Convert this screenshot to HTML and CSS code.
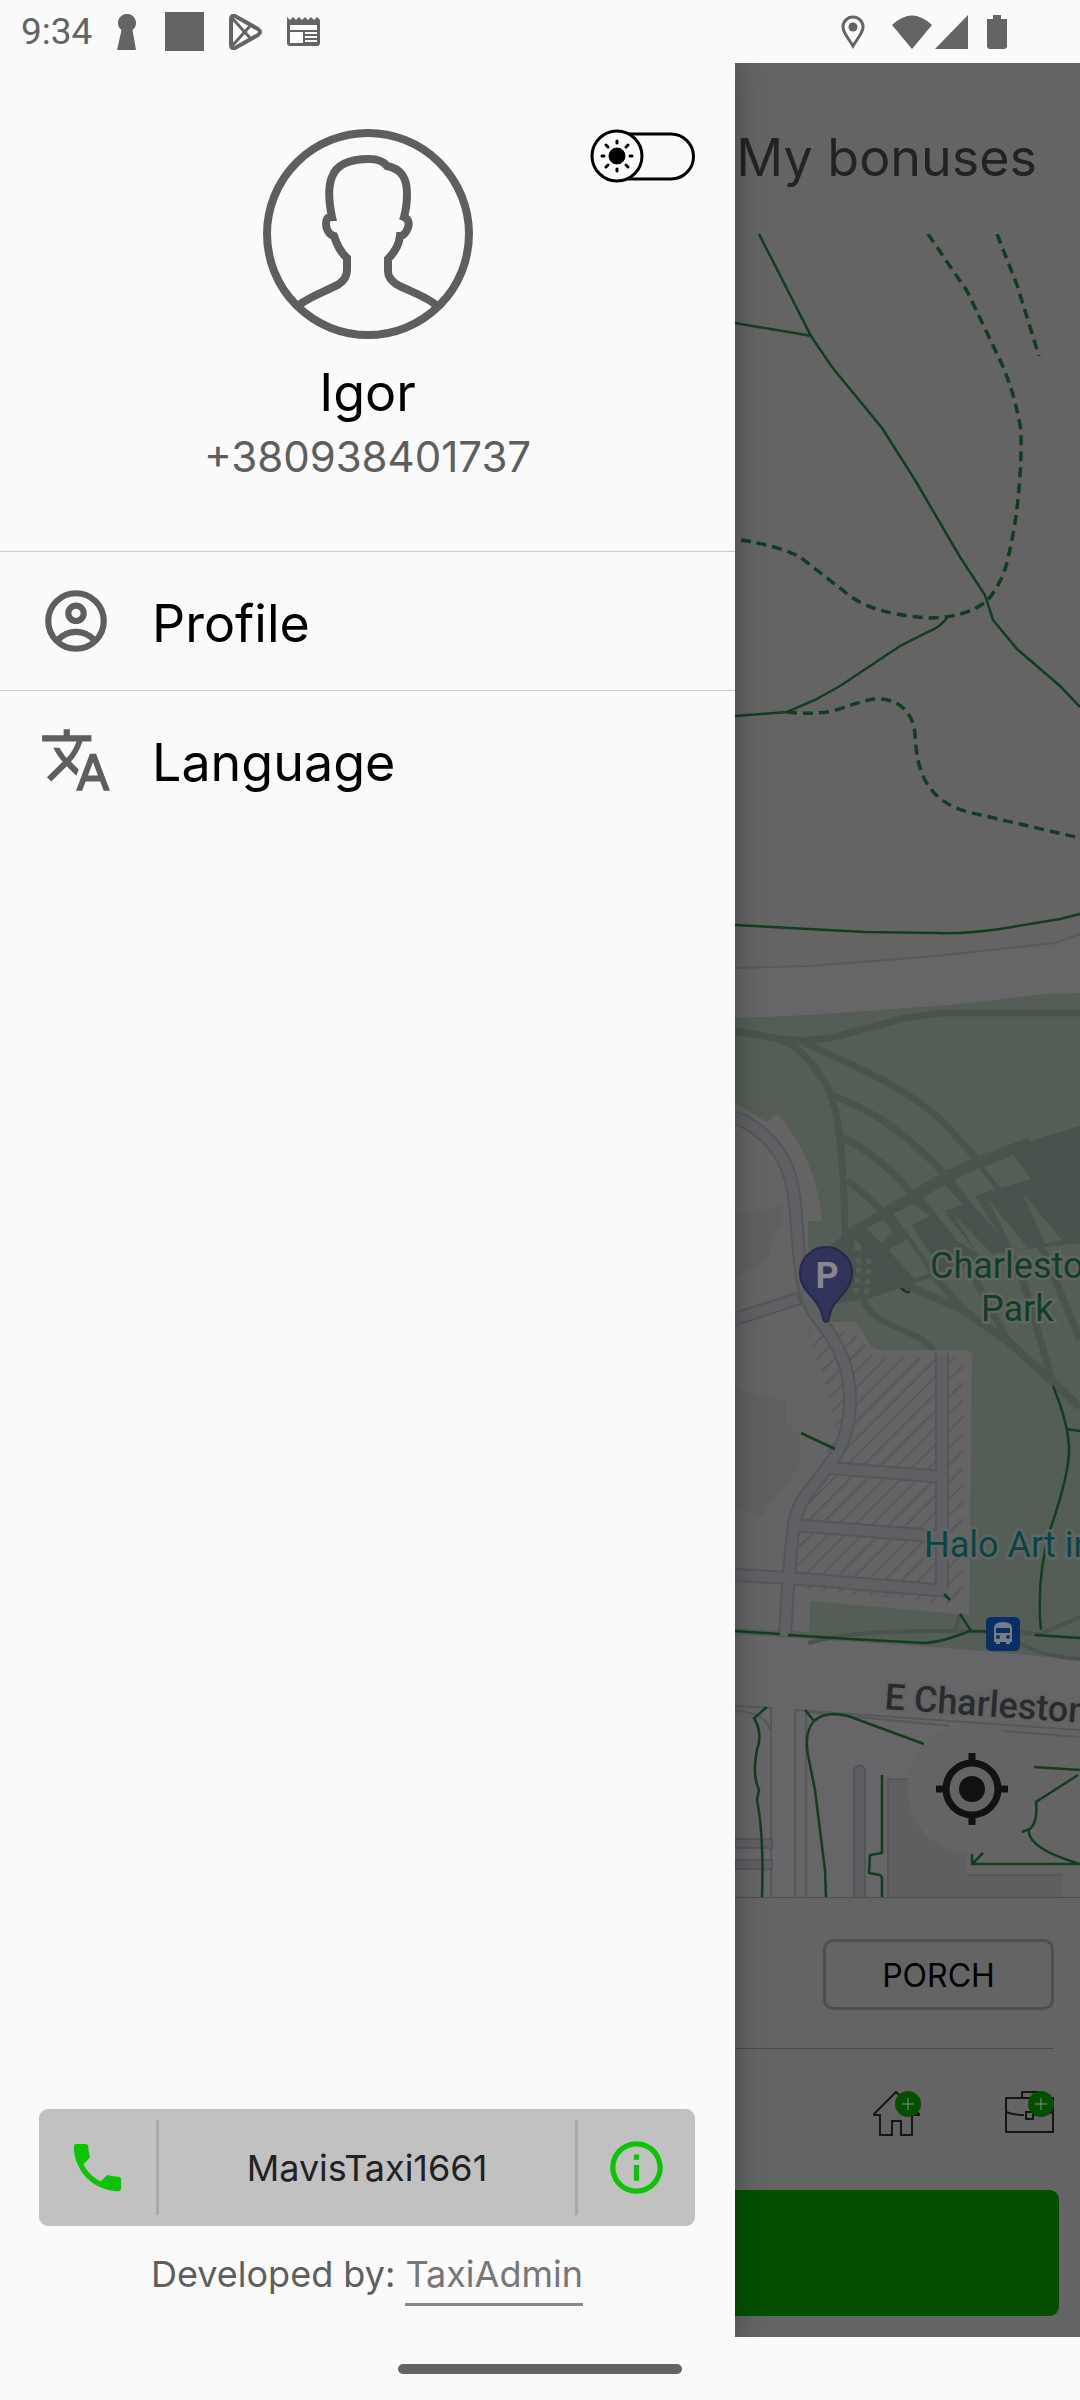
FILE: index.html
```html
<!DOCTYPE html>
<html lang="en">
<head>
  <meta charset="UTF-8" />
  <meta name="viewport" content="width=device-width, initial-scale=1.0"/>
  <title>MavisTaxi1661</title>
  <link rel="stylesheet" href="styles.css">
</head>
<body>
  <header class="status-bar">
    <div class="status-left">
      <time>9:34</time>
      <svg class="keyhole" width="20" height="36" viewBox="0 0 20 36"><path d="M1 9a9 9 0 1 1 14.500 7L19 36H0L4.500 16A9 9 0 0 1 1 9z"/></svg>
      <span class="square"></span>
      <svg class="play" width="33" height="36" viewBox="0 0 33 36" fill="none" stroke="#646464" stroke-width="4" stroke-linejoin="round"><path d="M2 5q0-4 4-3l23 13q4 3 0 6L6 34q-4 1-4-3z"/><path d="M3 4l19 21M3 32l19-21" stroke-width="3"/></svg>
      <svg width="33" height="30" viewBox="0 0 33 30"><path fill-rule="evenodd" d="M0 0l3 3 3-3 3 3 3-3 3 3 3-3 3 3 3-3 3 3 3-3 3 3V26q0 3-3 3H3q-3 0-3-3zM3 8v5h27V8zM3 15v11h13V15zM18 15v2h12v-2zm0 4v2h12v-2zm0 4v2h12v-2z"/></svg>
    </div>
    <div class="status-right">
      <svg class="pin-icon" width="24" height="34" viewBox="0 0 24 34"><path fill="none" stroke="#646464" stroke-width="3" d="M12 31C8 24 2 18 2 12a10 10 0 0 1 20 0c0 6-6 12-10 19z"/><circle cx="12" cy="12" r="4.500"/></svg>
      <svg width="40" height="34" viewBox="0 0 40 34"><path d="M20 34L0 10q20-19 40 0z"/></svg>
      <svg width="33" height="34" viewBox="0 0 33 34"><path d="M33 0v34H0z"/></svg>
      <svg class="battery" width="20" height="34" viewBox="0 0 20 34"><path d="M6 0h8v4h6v28l-2 2H2l-2-2V4h6z"/></svg>
    </div>
  </header>

  <main class="app">
    <!-- Side menu -->
    <aside class="drawer">
      <div class="user">
        <svg class="avatar" viewBox="0 0 210 210" fill="none" stroke="#5e5e5e" stroke-width="8">
          <circle cx="105" cy="105" r="101"/>
          <path d="M36 176c12-9 30-15 40-21 6-4 8-8 8-14v-12c-7-6-10-14-13-22-5-1-8-7-8-12 0-4 1-7 6-7-3-14-4-30 0-40 5-14 20-18 37-18 9 0 15 3 18 7 16 3 20 14 20 28 0 9-1 16-3 23 5 2 6 8 3 13-2 4-4 6-7 6-1 9-6 17-12 23v12c0 6 3 9 8 13 10 6 30 12 40 21"/>
        </svg>
        <label class="theme-switch">
          <input type="checkbox" role="switch" aria-label="Dark theme">
          <svg width="106" height="54" viewBox="0 0 106 54" stroke="#000" stroke-width="3">
            <path fill="none" d="M38 5h43a22 22 0 0 1 0 45H38"/>
            <circle fill="#fafafa" cx="27" cy="27" r="25"/>
            <circle cx="27" cy="27" r="8" fill="#000" stroke="#000" stroke-width="1"/>
            <path stroke-linecap="round" d="M27 12v2M27 40v2M12 27h2M40 27h2M16 16l2 2M36 36l2 2M38 16l-2 2M18 36l-2 2"/>
          </svg>
        </label>
        <h1>Igor</h1>
        <p>+380938401737</p>
      </div>
      <nav class="menu">
        <a href="#profile">
          <svg viewBox="0 0 24 24" fill="none" stroke="#5e5e5e" stroke-width="2"><circle cx="12" cy="12" r="9"/><circle cx="12" cy="9.500" r="2.500"/><path d="M6 18.200c3.500-3.600 8.500-3.600 12 0"/></svg>
          <span>Profile</span>
        </a>
        <a href="#language">
          <svg viewBox="0 0 24 24" fill="#5e5e5e"><path d="M12.870 15.070l-2.540-2.510.03-.03A17.520 17.520 0 0 0 14.070 6H17V4h-7V2H8v2H1v1.990h11.170C11.500 7.920 10.440 9.750 9 11.350 8.070 10.320 7.300 9.190 6.690 8h-2c.73 1.630 1.730 3.170 2.980 4.560l-5.090 5.020L4 19l5-5 3.110 3.110.76-2.040zM18.500 10h-2L12 22h2l1.120-3h4.750L21 22h2l-4.500-12zm-2.620 7l1.620-4.330L19.120 17h-3.240z"/></svg>
          <span>Language</span>
        </a>
      </nav>
      <footer class="drawer-footer">
        <div class="contact">
          <button type="button" aria-label="Call">
            <svg viewBox="0 0 24 24"><path d="M6.620 10.790c1.440 2.830 3.760 5.140 6.590 6.590l2.200-2.200c.27-.27.67-.36 1.020-.24 1.120.37 2.330.57 3.570.57.550 0 1 .45 1 1V20c0 .55-.45 1-1 1-9.390 0-17-7.610-17-17 0-.55.45-1 1-1h3.500c.55 0 1 .45 1 1 0 1.250.2 2.450.57 3.570.11.350.03.740-.25 1.020l-2.200 2.200z"/></svg>
          </button>
          <span>MavisTaxi1661</span>
          <button type="button" aria-label="Info">
            <svg viewBox="0 0 24 24"><path d="M11 7h2v2h-2zm0 4h2v6h-2zm1-9C6.480 2 2 6.480 2 12s4.480 10 10 10 10-4.480 10-10S17.520 2 12 2zm0 18c-4.410 0-8-3.590-8-8s3.590-8 8-8 8 3.590 8 8-3.590 8-8 8z"/></svg>
          </button>
        </div>
        <p>Developed by: <a href="#taxiadmin">TaxiAdmin</a></p>
      </footer>
    </aside>

    <!-- Order screen, dimmed while the menu is open -->
    <section class="screen">
      <h2>My bonuses</h2>
      <div class="map">
        <svg class="map-canvas" viewBox="735 234 345 1663" preserveAspectRatio="xMinYMin slice">
          <defs>
            <pattern id="hatch" width="17" height="17" patternUnits="userSpaceOnUse">
              <path d="M-2 19L19-2M-2 2l4-4M15 19l4-4" stroke="#58595c" stroke-width="2"/>
            </pattern>
          </defs>
          <path fill="#666567" d="M735 968L935 956 1055 943 1080 934V1897H735z"/>
          <path fill="none" stroke="#59585b" stroke-width="2" d="M735 968L810 966 935 956 1055 943 1080 934"/>

          <!-- Park -->
          <path fill="#545e56" d="M735 1018L810 1015 950 1005 1045 994 1080 993V1660L950 1648 735 1634z"/>
          <g fill="none" stroke="#4a534e" stroke-width="7">
            <path d="M735 1031L780 1039 805 1041 835 1037 905 1018 940 1013H1080"/>
            <path d="M780 1040Q802 1046 823 1080C838 1100 844 1150 845 1240"/>
            <path d="M805 1043C860 1068 925 1096 955 1135L1000 1185 1030 1225 1045 1255 1080 1340"/>
            <path d="M833 1096C880 1112 915 1142 950 1180L985 1220 1020 1270 1052 1380"/>
            <path d="M843 1138C880 1155 912 1190 930 1218L970 1270 1010 1345"/>
            <path d="M847 1180C880 1205 905 1235 925 1265L965 1312"/>
            <path d="M905 1285L960 1308 1010 1343 1080 1407" stroke-width="8"/>
            <path d="M862 1295Q866 1313 885 1322L920 1338 936 1352" stroke-width="6"/>
            <path d="M845 1236L885 1212 945 1176 980 1160 1030 1142" stroke-width="9"/>
          </g>
          <path fill="#49524d" d="M830 1245L858 1226 880 1214 945 1177 985 1160 1030 1141 1080 1126V1243L1000 1252 930 1278 870 1298 835 1304z"/>
          <g fill="#545e56">
            <path d="M984 1167l29-12 18 24-30 9z"/>
            <path d="M954 1180l25-12 16 21-20 7 24 38-22-24z"/>
            <path d="M923 1197l22-12 18 20-19 6 33 42-20-12-20-26z"/>
            <path d="M893 1214l20-10 17 12-18 9 28 45-14-11z"/>
            <path d="M888 1250l19-11 23 34-15 6z"/>
            <path d="M866 1228l17-8 10 12-12 11z"/>
            <path d="M1022 1192l40 48-17 4z"/>
            <path d="M987 1198l41 50-14 3z"/>
            <path d="M952 1213l41 42-12 4z"/>
            <path d="M854 1240l6 3 2 8-8-1z"/>
            <path d="M856 1258h5v5h-5zM866 1259h5v5h-5zM856 1268h5v5h-5zM866 1269h5v5h-5zM855 1278h5v5h-5zM865 1279h5v5h-5zM854 1288h5v5h-5zM864 1289h5v5h-5z"/>
          </g>

          <!-- Buildings and car park -->
          <path fill="#646464" d="M735 1103l32 19 10-8Q816 1156 822 1221h-14v42l18 59h29q5 4 13 20 3 7 14 8h83q9 1 7 12l-3 253-159-14-1 31-74-4z"/>
          <path fill="#606060" d="M735 1216l48-10v18l-12 18v14l-36 23zM735 1388l52 14-2 20 15 14v30l-38 50-27-8z"/>
          <path fill="url(#hatch)" d="M808 1332h47l20 26h88v247l-168-17 4-86 38-70-15-60z"/>
          <g fill="none" stroke="#55565a" stroke-width="14">
            <path d="M735 1117Q785 1139 793 1190C800 1230 795 1290 818 1318S850 1370 850 1400C850 1470 800 1480 794 1525Q790 1550 785 1636"/>
            <path d="M735 1319L803 1297M830 1468L945 1477M795 1525L945 1537M735 1575L790 1578 948 1591M942 1353V1591"/>
          </g>
          <g fill="none" stroke="#5f6063" stroke-width="10">
            <path d="M735 1117Q785 1139 793 1190C800 1230 795 1290 818 1318S850 1370 850 1400C850 1470 800 1480 794 1525Q790 1550 785 1636"/>
            <path d="M735 1319L798 1299M828 1468L945 1477M793 1525L945 1537M735 1575L790 1578 948 1591M942 1353V1591"/>
          </g>
          <g fill="none" stroke="#4a534e" stroke-width="4">
            <path d="M808 1643Q850 1631 930 1631T1040 1634L1080 1617M1018 1642Q1040 1656 1080 1659M955 1632l4-16"/>
          </g>

          <!-- Streets south of the park -->
          <path fill="#5f5f5f" d="M888 1778h192v119H888z"/>
          <path fill="#646464" d="M966 1720h114v155H966zM1063 1870h17v27h-17z"/>
          <circle cx="972" cy="1789" r="65" fill="#646464"/>
          <path fill="none" stroke="#57575a" stroke-width="2" d="M735 1706L771 1708V1897M795 1897V1710L1080 1730M806 1897V1712L950 1726M1003 1731L1080 1737M888 1897V1779H906M735 1711Q765 1712 770 1730M967 1875h96"/>
          <path fill="#5e5f62" stroke="#555659" stroke-width="2" d="M735 1839h37v9h-37zM735 1860h37v9h-37zM854 1897V1770q5-9 11 0v127"/>

          <!-- Footpaths -->
          <g fill="none" stroke="#123d1f" stroke-width="2.500">
            <path d="M759 234L811 336 832 367 882 428 915 480 960 557 985 595 993 620 1017 649 1060 686 1080 707M735 323L812 336"/>
            <path d="M947 618Q940 627 930 631L900 646 840 686 815 700 787 712 735 716"/>
            <path d="M735 925L865 932 938 933Q965 934 1000 929L1060 919 1080 914"/>
            <path d="M735 1631L780 1634M788 1635L850 1639 925 1643Q942 1642 970 1631L1000 1632M960 1614L971 1631M944 1594L950 1600"/>
            <path d="M1053 1386Q1069 1425 1069 1450T1050 1530Q1036 1580 1041 1630M1035 1635L1080 1638M1066 1429L1080 1431M801 1433L835 1449M901 1288l5 4h4"/>
            <path d="M767 1707L754 1718Q763 1733 757 1750 752 1775 759 1790L757 1800Q764 1835 762 1897"/>
            <path d="M805 1710L814 1721Q804 1732 808 1755L815 1790 825 1870 826 1897M814 1721Q826 1710 848 1716L924 1744"/>
            <path d="M882 1775V1853L870 1855 869 1873 880 1875 882 1878V1897M1034 1767L1080 1770M1078 1775L1036 1802Q1038 1822 1030 1829L1022 1832M1029 1829Q1026 1848 1080 1864H971M972 1864V1854M972 1864L983 1853"/>
          </g>
          <g fill="none" stroke="#123d1f" stroke-width="3.500" stroke-dasharray="10 6">
            <path d="M928 234L967 291 1000 360Q1014 390 1021 430 1022 500 1008 558 1003 582 987 601 965 618 928 618 870 614 845 592L800 557Q780 546 735 539"/>
            <path d="M997 234L1017 285 1039 356"/>
            <path d="M787 712Q810 715 833 711C850 706 865 699 878 699 900 699 914 714 915 735 917 770 925 800 968 812L1080 838"/>
          </g>

          <!-- Places -->
          <path fill="#31345a" stroke="#262949" stroke-width="2" d="M826 1322q-3 0-4-8c-3-16-22-21-22-41a26 26 0 0 1 52 0c0 20-19 25-22 41q-1 8-4 8z"/>
          <text class="parking" x="827" y="1288">P</text>
          <text class="park" x="930" y="1278">Charleston</text>
          <text class="park" x="981" y="1321">Park</text>
          <text class="poi" x="924" y="1557">Halo Art in</text>
          <text class="street" x="884" y="1709" transform="rotate(4 884 1709)">E Charleston</text>
          <rect x="986" y="1617" width="34" height="34" rx="5" fill="#0a2e67"/>
          <path fill="#777c86" fill-rule="evenodd" d="M994 1628q0-6 9-6t9 6v14h-2v2h-4v-2h-6v2h-4v-2h-2zM996 1628v5h14v-5zM996 1637a2 2 0 0 0 4 0 2 2 0 0 0-4 0zM1006 1637a2 2 0 0 0 4 0 2 2 0 0 0-4 0z"/>
        </svg>
        <button type="button" class="locate" aria-label="My location">
          <svg width="72" height="72" viewBox="0 0 72 72" fill="none" stroke="#111" stroke-width="7"><circle cx="36" cy="36" r="26"/><circle cx="36" cy="36" r="13" fill="#111" stroke="none"/><path d="M36 0v10M36 62v10M0 36h10M62 36h10"/></svg>
        </button>
      </div>
      <div class="order">
        <div class="porch-row"><button type="button" class="porch">PORCH</button></div>
        <div class="places">
          <button type="button" aria-label="Add home">
            <svg width="49" height="45" viewBox="0 0 49 45"><path fill="none" stroke="#161616" stroke-width="2" d="M24 1L2 23v1h6v20h12V30h9v14h11V24h7v-1z"/><circle cx="36" cy="13" r="13" fill="#045000"/><path d="M36 7v12M30 13h12" stroke="#7c977c"/></svg>
          </button>
          <button type="button" aria-label="Add work">
            <svg width="49" height="45" viewBox="0 0 49 45"><path fill="none" stroke="#161616" stroke-width="2" d="M1 7h47v34H1zM17 7V1h16v6M1 21q8 3 18 3M28 24q12 0 20-3M21 21h7v7h-7z"/><circle cx="36" cy="13" r="13" fill="#045000"/><path d="M36 7v12M30 13h12" stroke="#7c977c"/></svg>
          </button>
        </div>
        <button type="button" class="submit" aria-label="Order"></button>
      </div>
    </section>
  </main>

  <div class="nav-bar"><span></span></div>
</body>
</html>
```
FILE: styles.css
```css
* {
  box-sizing: border-box;
}
body {
  font-family: Inter, sans-serif;
  font-optical-sizing: none;
  background: #fafafa;
  color: #000;
  margin: 0;
  min-height: 100vh;
  display: flex;
  flex-direction: column;
}
h1, h2, p {
  margin: 0;
  font-weight: 400;
}
a {
  color: inherit;
  text-decoration: none;
}
button {
  background: none;
  border: none;
  padding: 0;
  font: inherit;
  color: inherit;
  cursor: pointer;
}
svg {
  display: block;
}

/* system bars */
.status-bar {
  display: flex;
  justify-content: space-between;
  height: 63px;
  padding: 0 73px 0 21px;
  color: #646464;
  fill: #646464;
  font-family: Roboto, sans-serif;
  font-size: 37px;
}
.status-left, .status-right {
  display: flex;
  align-items: center;
}
.status-left {
  gap: 25px;
}
.square {
  width: 39px;
  height: 39px;
  background: #646464;
}
.status-left .square {
  margin: 0 0 0 3px;
}
.status-right {
  gap: 3px;
}
.pin-icon {
  margin-right: 24px;
}
.battery {
  margin-left: 16px;
}
.nav-bar {
  height: 63px;
  display: flex;
  justify-content: center;
  align-items: center;
}
.nav-bar span {
  width: 284px;
  height: 10px;
  border-radius: 5px;
  background: #646464;
}

.app {
  flex: 1;
  display: grid;
  grid-template-columns: 49fr 23fr;
}

/* side menu */
.drawer {
  display: flex;
  flex-direction: column;
  z-index: 1;
  background: #fafafa;
  box-shadow: 0 0 28px rgba(0, 0, 0, 0.3);
  clip-path: inset(0 -40px 0 0);
}
.user {
  display: grid;
  grid-template-columns: 1fr 210px 1fr;
  justify-items: center;
  padding: 66px 39px 64px;
}
.avatar {
  grid-column: 2;
  width: 210px;
  height: 210px;
}
.theme-switch {
  justify-self: end;
  align-self: start;
  position: relative;
  cursor: pointer;
}
.theme-switch input {
  position: absolute;
  inset: 0;
  width: 100%;
  height: 100%;
  margin: 0;
  opacity: 0;
}
.user h1, .user p {
  grid-column: 1 / -1;
}
.user h1 {
  margin-top: 22px;
  font-size: 52px;
  line-height: 64px;
}
.user p {
  margin-top: 2px;
  font-size: 42px;
  line-height: 60px;
  color: #5e5e5e;
}
.menu a {
  display: flex;
  align-items: center;
  gap: 39px;
  height: 139px;
  padding: 0 39px;
  border-top: 1px solid #ccc;
  font-size: 52px;
}
.menu span {
  padding-top: 4px;
}
.menu svg {
  width: 74px;
  height: 74px;
}
.drawer-footer {
  margin-top: auto;
  padding: 0 40px 31px 39px;
  font-size: 36px;
  line-height: 44px;
  color: #5e5e5e;
}
.contact {
  display: flex;
  align-items: center;
  height: 117px;
  border-radius: 9px;
  background: #c1c1c1;
  color: #222;
}
.contact span {
  flex: 1;
  height: 95px;
  display: flex;
  align-items: center;
  justify-content: center;
  border: solid #aaa;
  border-width: 0 3px;
}
.contact button {
  width: 117px;
}
.contact svg {
  width: 63px;
  height: 63px;
  margin: 0 auto;
  fill: #0bc503;
}
.drawer-footer p {
  margin-top: 26px;
  text-align: center;
}
.drawer-footer a {
  display: inline-block;
  padding-bottom: 7px;
  border-bottom: 3px solid #888;
  color: #777;
}

/* order screen */
.screen {
  display: flex;
  flex-direction: column;
  min-width: 0;
  background: #646464;
}
.screen h2 {
  height: 171px;
  padding: 63px 43px 0 0;
  font-size: 52px;
  line-height: 64px;
  text-align: right;
  white-space: nowrap;
  color: #232323;
}
.map {
  flex: 1;
  position: relative;
  overflow: hidden;
}
.map-canvas {
  position: absolute;
  width: 100%;
  height: 100%;
}
.map-canvas text {
  font-family: Roboto, sans-serif;
  font-size: 36px;
  paint-order: stroke;
  stroke: #626462;
  stroke-width: 5px;
}
.map-canvas .park {
  fill: #103f21;
}
.map-canvas .poi {
  fill: #0b4446;
}
.map-canvas .street {
  font-weight: 500;
  fill: #2a2b2e;
}
.map-canvas .parking {
  font-weight: 700;
  text-anchor: middle;
  fill: #85868e;
  stroke: none;
}
.locate {
  position: absolute;
  right: 72px;
  bottom: 72px;
}
.order {
  border-top: 1px solid #4f4f4f;
}
.porch-row {
  display: flex;
  justify-content: flex-end;
  margin-right: 26px;
  padding: 41px 0 38px;
  border-bottom: 1px solid #4c4c4c;
}
.porch {
  width: 231px;
  height: 71px;
  padding-top: 2px;
  border: 3px solid #4f4f4f;
  border-radius: 10px;
  font-size: 32px;
  color: #000;
}
.places {
  display: flex;
  justify-content: flex-end;
  gap: 84px;
  padding: 42px 26px 54px 0;
}
.submit {
  display: block;
  width: calc(100% - 21px);
  height: 126px;
  margin-bottom: 21px;
  border-radius: 0 9px 9px 0;
  background: #035000;
}
```
